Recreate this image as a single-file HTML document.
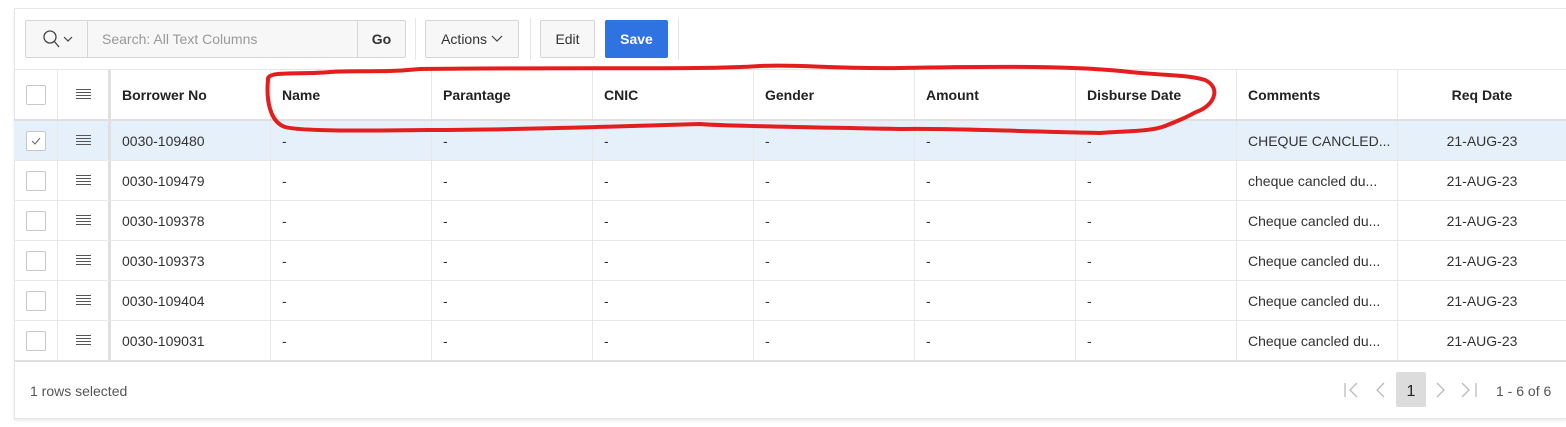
<!DOCTYPE html>
<html><head><style>
body{margin:0;width:1566px;height:427px;background:#fff;font-family:"Liberation Sans",sans-serif;font-size:14px;color:#333;position:relative;overflow:hidden}
.wrap{position:absolute;left:14px;top:8px;right:0;height:409px;border:1px solid #e6e6e6;border-right:none;box-shadow:0 2px 3px rgba(0,0,0,.08)}
.btn{position:absolute;top:20px;height:38px;box-sizing:border-box;border:1px solid #d6d6d6;background:#f7f7f7;border-radius:2px;display:flex;align-items:center;justify-content:center}
.sep{position:absolute;top:18px;height:42px;width:1px;background:#e6e6e6}
.row{position:absolute;left:14px;right:0;height:40px;border-bottom:1px solid #e8e8e8;box-sizing:border-box}
.c{position:absolute;top:0;height:100%;display:flex;align-items:center;box-sizing:border-box;padding-left:11px;border-right:1px solid #e8e8e8;white-space:nowrap}
.h .c{font-weight:bold;color:#222}
.cb{width:20px;height:20px;border:1px solid #c8c8c8;border-radius:2px;box-sizing:border-box;background:#fff}
.ham{width:15px;height:11px;background:repeating-linear-gradient(#555 0 1px,transparent 1px 3px)}
</style></head><body>
<div class="wrap"></div>
<div class="btn" style="left:25px;width:63px;border-radius:2px 0 0 2px"><svg width="40" height="20"><circle cx="13" cy="8" r="6" fill="none" stroke="#444" stroke-width="1.3"/><line x1="17" y1="12" x2="22" y2="18" stroke="#444" stroke-width="1.3"/><polyline points="27,8 31,12 35,8" fill="none" stroke="#444" stroke-width="1.2"/></svg></div>
<div class="btn" style="left:87px;width:271px;justify-content:flex-start;padding-left:14px;color:#999;border-radius:0">Search: All Text Columns</div>
<div class="btn" style="left:357px;width:49px;font-weight:bold;border-radius:0 2px 2px 0">Go</div>
<div class="sep" style="left:415px"></div>
<div class="btn" style="left:425px;width:94px">Actions&nbsp;<svg width="12" height="8"><polyline points="1,1 6,6 11,1" fill="none" stroke="#444" stroke-width="1.2"/></svg></div>
<div class="sep" style="left:530px"></div>
<div class="btn" style="left:540px;width:55px">Edit</div>
<div class="btn" style="left:605px;width:63px;background:#2f72e2;border-color:#2f72e2;color:#fff;font-weight:bold">Save</div>
<div class="sep" style="left:678px"></div>
<div style="position:absolute;left:14px;right:0;top:69px;height:1px;background:#e6e6e6"></div>

<div class="row h" style="top:70px;height:51px;border-bottom:2px solid #e0e0e0">
<div class="c" style="left:0;width:44px;justify-content:center;padding:0"><div class="cb"></div></div>
<div class="c" style="left:44px;width:53px;justify-content:center;padding:0;border-right:3px solid #e0e0e0"><div class="ham"></div></div>
<div class="c" style="left:97px;width:160px">Borrower No</div>
<div class="c" style="left:257px;width:161px">Name</div>
<div class="c" style="left:418px;width:161px">Parantage</div>
<div class="c" style="left:579px;width:161px">CNIC</div>
<div class="c" style="left:740px;width:161px">Gender</div>
<div class="c" style="left:901px;width:161px">Amount</div>
<div class="c" style="left:1062px;width:161px">Disburse Date</div>
<div class="c" style="left:1223px;width:161px">Comments</div>
<div class="c" style="left:1384px;width:168px;justify-content:center;padding:0;border:none">Req Date</div>
</div>

<div id="rows"></div>
<script>
var d=[["0030-109480","CHEQUE CANCLED..."],["0030-109479","cheque cancled du..."],["0030-109378","Cheque cancled du..."],["0030-109373","Cheque cancled du..."],["0030-109404","Cheque cancled du..."],["0030-109031","Cheque cancled du..."]];
var h="";d.forEach(function(r,i){var t=121+i*40;var bg=i==0?"background:#e6f0fb;":"";
h+='<div class="row" style="top:'+t+'px;'+bg+'">'+
'<div class="c" style="left:0;width:44px;justify-content:center;padding:0"><div class="cb" style="'+(i==0?'display:flex;align-items:center;justify-content:center':'')+'">'+(i==0?'<svg width="12" height="10"><polyline points="2,5 5,8 10,2" fill="none" stroke="#666" stroke-width="1"/></svg>':'')+'</div></div>'+
'<div class="c" style="left:44px;width:53px;justify-content:center;padding:0;border-right:3px solid #e0e0e0"><div class="ham"></div></div>'+
'<div class="c" style="left:97px;width:160px">'+r[0]+'</div>';
[257,418,579,740,901,1062].forEach(function(x){h+='<div class="c" style="left:'+x+'px;width:161px">-</div>'});
h+='<div class="c" style="left:1223px;width:161px">'+r[1]+'</div><div class="c" style="left:1384px;width:168px;justify-content:center;padding:0;border:none">21-AUG-23</div></div>';});
document.getElementById("rows").innerHTML=h;
</script>
<div style="position:absolute;left:14px;right:0;top:360px;height:2px;background:#e0e0e0"></div>
<div style="position:absolute;left:30px;top:383px;color:#555">1 rows selected</div>
<svg style="position:absolute;left:1340px;top:372px" width="150" height="36">
<g fill="none" stroke="#bbb" stroke-width="1.3"><line x1="5" y1="11" x2="5" y2="25"/><polyline points="17,11 10,18 17,25"/><polyline points="44,11 37,18 44,25"/><polyline points="97,11 104,18 97,25"/><polyline points="122,11 129,18 122,25"/><line x1="136" y1="11" x2="136" y2="25"/></g>
<rect x="56" y="0" width="30" height="35" rx="2" fill="#dcdcdc"/>
<text x="71" y="24" text-anchor="middle" font-size="16" fill="#222" font-family="Liberation Sans">1</text>
</svg>
<div style="position:absolute;left:1496px;top:383px;color:#555">1 - 6 of 6</div>
<svg style="position:absolute;left:0;top:0" width="1566" height="427"><path d="M268,80 C266,70 300,75 330,72 C360,70 380,73 420,69 C600,67 700,70 760,66 C800,64 830,69 900,68 C1000,66 1080,66 1130,72 C1170,76 1190,75 1205,80 C1222,88 1214,106 1196,112 C1185,118 1180,120 1165,126 C1150,132 1120,131 1100,133 C1000,131 950,128 900,129 C800,127 720,126 700,124 C600,127 500,130 430,130 C350,131 300,131 285,127 C270,122 266,100 268,80 Z" fill="none" stroke="#e41e1e" stroke-width="4" stroke-linejoin="round"/></svg>
</body></html>
